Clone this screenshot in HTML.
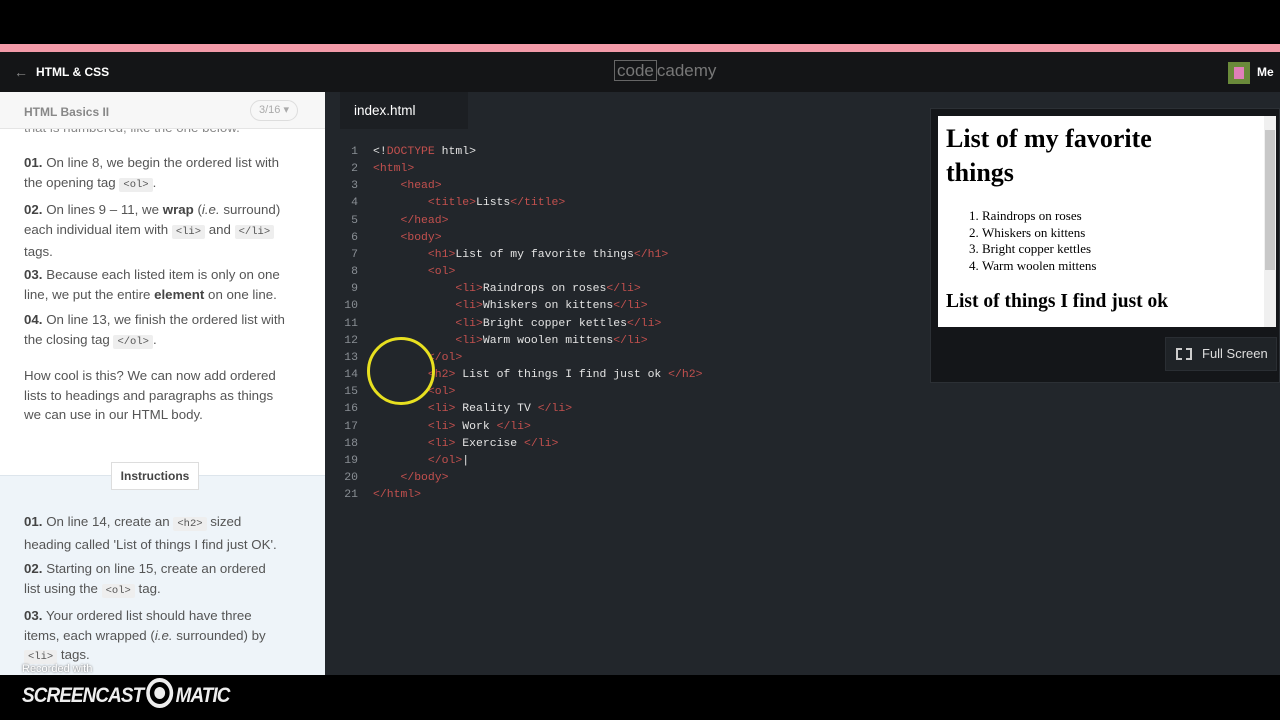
<!DOCTYPE html>
<html><head><style>
*{margin:0;padding:0;box-sizing:border-box}
body{width:1280px;height:720px;background:#000;position:relative;overflow:hidden;font-family:"Liberation Sans",sans-serif}
.pink{position:absolute;top:44px;left:0;width:1280px;height:8px;background:#f29aa8}
.hdr{position:absolute;top:52px;left:0;width:1280px;height:40px;background:#141517;color:#fff}
.left{position:absolute;top:92px;left:0;width:325px;height:583px;background:#fff;overflow:hidden;color:#555;font-size:13.3px;line-height:19.5px}
.lefttop{position:absolute;top:0;left:0;width:325px;height:37px;background:#f7f7f7;border-bottom:1px solid #e5e5e5;z-index:2}
.p{position:absolute;left:24px;width:274px}
.p b{color:#444}
code{font-family:"Liberation Mono",monospace;font-size:10.5px;background:#eee;padding:1px 4px;border-radius:2px;color:#555}
.editor{position:absolute;top:92px;left:325px;width:955px;height:583px;background:#22262b}
.tab{position:absolute;top:0;left:15px;width:128px;height:37px;background:#1c1f23;color:#fff;font-size:13.5px;line-height:37px;padding-left:14px}
.code{position:absolute;top:51px;left:0;font-family:"Liberation Mono",monospace;font-size:11.45px;line-height:17.15px;color:#e4e4e4;white-space:pre}
.ln{display:inline-block;width:33px;text-align:right;color:#8a8f95;margin-right:15px}
.t{color:#c2504e}
.prev{position:absolute;top:108px;left:930px;width:350px;height:275px;background:#141619;border:1px solid #2c3035}
.frame{position:absolute;top:7px;left:7px;width:338px;height:211px;background:#fff;font-family:"Liberation Serif",serif;color:#000;overflow:hidden}
.sb{position:absolute;right:0;top:0;width:12px;height:211px;background:#f0f0f0}
</style></head><body>
<div class="pink"></div>
<div class="hdr">
<div style="position:absolute;left:14px;top:12px;color:#888;font-size:14px">&#8592;</div>
<div style="position:absolute;left:36px;top:13px;font-size:12px;font-weight:bold">HTML &amp; CSS</div>
<div style="position:absolute;left:614px;top:9px;font-size:17px;color:#777"><span style="border:1.5px solid #666;padding:0 2px">code</span>cademy</div>
<div style="position:absolute;left:1228px;top:10px;width:22px;height:22px;background:#6a8a3a"><div style="margin:5px 6px;width:10px;height:12px;background:#e07fb9"></div></div>
<div style="position:absolute;left:1257px;top:13px;font-size:12px;font-weight:bold">Me</div>
</div>
<div class="left">
<div class="lefttop"><span style="position:absolute;left:24px;top:11px;font-size:12px;font-weight:bold;color:#888">HTML Basics II</span><span style="position:absolute;left:250px;top:8px;width:48px;height:21px;border:1px solid #ddd;border-radius:11px;font-size:11px;color:#aaa;text-align:center;line-height:19px">3/16 ▾</span></div>
<div class="p" style="top:26px;color:#888">that is numbered, like the one below.</div>
<div class="p" style="top:61px"><b>01.</b> On line 8, we begin the ordered list with the opening tag <code>&lt;ol&gt;</code>.</div>
<div class="p" style="top:108px"><b>02.</b> On lines 9 – 11, we <b>wrap</b> (<i>i.e.</i> surround) each individual item with <code>&lt;li&gt;</code> and <code>&lt;/li&gt;</code> tags.</div>
<div class="p" style="top:173px"><b>03.</b> Because each listed item is only on one line, we put the entire <b>element</b> on one line.</div>
<div class="p" style="top:218px"><b>04.</b> On line 13, we finish the ordered list with the closing tag <code>&lt;/ol&gt;</code>.</div>
<div class="p" style="top:274px;width:264px">How cool is this? We can now add ordered lists to headings and paragraphs as things we can use in our HTML body.</div>
<div style="position:absolute;top:383px;left:0;width:325px;height:200px;background:#eef4f9;border-top:1px solid #dde5ec"></div>
<div style="position:absolute;top:370px;left:111px;width:88px;height:28px;background:#fff;border:1px solid #ddd;font-size:12px;font-weight:bold;color:#444;text-align:center;line-height:26px">Instructions</div>
<div class="p" style="top:420px;width:258px"><b>01.</b> On line 14, create an <code>&lt;h2&gt;</code> sized heading called 'List of things I find just OK'.</div>
<div class="p" style="top:467px;width:255px"><b>02.</b> Starting on line 15, create an ordered list using the <code>&lt;ol&gt;</code> tag.</div>
<div class="p" style="top:514px;width:255px"><b>03.</b> Your ordered list should have three items, each wrapped (<i>i.e.</i> surrounded) by <code>&lt;li&gt;</code> tags.</div>
<div style="position:absolute;top:568px;left:22px;font-size:11px;color:#fff;text-shadow:0 0 2px #555">Recorded with</div>
</div>
<div class="editor">
<div class="tab">index.html</div>
<div class="code"><span class="ln">1</span>&lt;!<span class="t">DOCTYPE</span> html&gt;
<span class="ln">2</span><span class="t">&lt;html&gt;</span>
<span class="ln">3</span>    <span class="t">&lt;head&gt;</span>
<span class="ln">4</span>        <span class="t">&lt;title&gt;</span>Lists<span class="t">&lt;/title&gt;</span>
<span class="ln">5</span>    <span class="t">&lt;/head&gt;</span>
<span class="ln">6</span>    <span class="t">&lt;body&gt;</span>
<span class="ln">7</span>        <span class="t">&lt;h1&gt;</span>List of my favorite things<span class="t">&lt;/h1&gt;</span>
<span class="ln">8</span>        <span class="t">&lt;ol&gt;</span>
<span class="ln">9</span>            <span class="t">&lt;li&gt;</span>Raindrops on roses<span class="t">&lt;/li&gt;</span>
<span class="ln">10</span>            <span class="t">&lt;li&gt;</span>Whiskers on kittens<span class="t">&lt;/li&gt;</span>
<span class="ln">11</span>            <span class="t">&lt;li&gt;</span>Bright copper kettles<span class="t">&lt;/li&gt;</span>
<span class="ln">12</span>            <span class="t">&lt;li&gt;</span>Warm woolen mittens<span class="t">&lt;/li&gt;</span>
<span class="ln">13</span>        <span class="t">&lt;/ol&gt;</span>
<span class="ln">14</span>        <span class="t">&lt;h2&gt;</span> List of things I find just ok <span class="t">&lt;/h2&gt;</span>
<span class="ln">15</span>        <span class="t">&lt;ol&gt;</span>
<span class="ln">16</span>        <span class="t">&lt;li&gt;</span> Reality TV <span class="t">&lt;/li&gt;</span>
<span class="ln">17</span>        <span class="t">&lt;li&gt;</span> Work <span class="t">&lt;/li&gt;</span>
<span class="ln">18</span>        <span class="t">&lt;li&gt;</span> Exercise <span class="t">&lt;/li&gt;</span>
<span class="ln">19</span>        <span class="t">&lt;/ol&gt;</span>|
<span class="ln">20</span>    <span class="t">&lt;/body&gt;</span>
<span class="ln">21</span><span class="t">&lt;/html&gt;</span></div>
<div style="position:absolute;left:42px;top:245px;width:68px;height:68px;border:3px solid #e8e020;border-radius:50%"></div>
</div>
<div class="prev">
<div class="frame">
<div style="position:absolute;left:8px;top:6px;font-size:26px;font-weight:bold;line-height:34px;width:245px">List of my favorite things</div>
<ol style="position:absolute;left:28px;top:92px;font-size:13px;line-height:16.5px;padding-left:16px"><li>Raindrops on roses</li><li>Whiskers on kittens</li><li>Bright copper kettles</li><li>Warm woolen mittens</li></ol>
<div style="position:absolute;left:8px;top:175px;font-size:19.5px;font-weight:bold">List of things I find just ok</div>
<div class="sb"><div style="margin:14px 1px;width:10px;height:140px;background:#c8c8c8"></div></div>
</div>
<div style="position:absolute;left:234px;top:228px;width:112px;height:34px;background:#1f2327;border:1px solid #2a2e33;color:#ddd;font-size:13px;line-height:32px;padding-left:36px">Full Screen<span style="position:absolute;left:10px;top:10px;width:16px;height:12px;border:2px dashed #ccc"></span></div>
</div>
<div style="position:absolute;left:22px;top:678px;color:#eee;font-size:21px;font-weight:bold;font-style:italic;letter-spacing:-1px;transform:scaleX(0.9);transform-origin:left">SCREENCAST<span style="display:inline-block;width:30px;height:30px;border:4px solid #eee;border-radius:50%;vertical-align:-6px;margin:0 3px;position:relative"><span style="position:absolute;left:5px;top:5px;width:12px;height:12px;background:#eee;border-radius:50%"></span></span>MATIC</div>
</body></html>
